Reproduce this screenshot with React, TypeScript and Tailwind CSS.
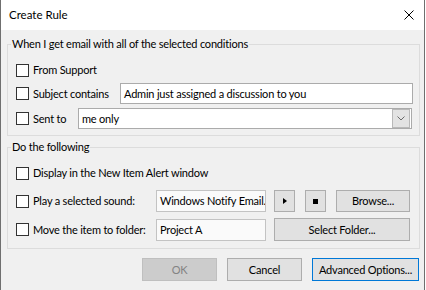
import React from "react";

const Check = () => (
  <span className="block w-[13px] h-[13px] border border-[#333333] bg-white shrink-0" />
);

const Btn = ({ children, className = "" }: { children: React.ReactNode; className?: string }) => (
  <div
    className={`flex items-center justify-center border border-[#adadad] bg-[#e1e1e1] text-black shrink-0 ${className}`}
  >
    {children}
  </div>
);

export default function App() {
  return (
    <div className="w-[426px] h-[290px] bg-white overflow-hidden text-[11px] leading-[16px] tracking-[-0.2px] text-black font-['Lato',sans-serif]">
      <div className="w-[425px] h-[290px] border-x border-[#6f6f6f] flex flex-col">
        {/* Title bar */}
        <div className="h-[30px] bg-white flex items-center justify-between pl-[8px] pr-[10px] shrink-0">
          <span className="text-[11.5px] tracking-normal">Create Rule</span>
          <svg width="10" height="10" viewBox="0 0 10 10">
            <path d="M0.5 0.5 L9.5 9.5 M9.5 0.5 L0.5 9.5" stroke="#000" strokeWidth="1" />
          </svg>
        </div>
        {/* Body */}
        <div className="flex-1 bg-[#f0f0f0] pl-[6px] pt-[6px] flex flex-col">
          <fieldset className="w-[413px] border border-[#dcdcdc] pl-[8px] pr-[6px] pt-[8px] pb-[6px] m-0 min-w-0">
            <legend className="ml-[-5px] px-[1px] leading-[16px]">
              When I get email with all of the selected conditions
            </legend>
            <div className="h-[20px] flex items-center gap-[4px]">
              <Check />
              <span className="whitespace-nowrap">From Support</span>
            </div>
            <div className="mt-[3px] h-[21px] flex items-center">
              <Check />
              <span className="ml-[4px] whitespace-nowrap">Subject contains</span>
              <div className="ml-auto w-[293px] h-[21px] border border-[#ababab] bg-white flex items-center pl-[3px] whitespace-nowrap overflow-hidden">
                Admin just assigned a discussion to you
              </div>
            </div>
            <div className="mt-[4px] h-[21px] flex items-center">
              <Check />
              <span className="ml-[4px] whitespace-nowrap">Sent to</span>
              <div className="ml-auto mr-[1px] w-[334px] h-[21px] border border-[#ababab] bg-white flex items-stretch pr-[1px]">
                <div className="flex-1 flex items-center pl-[3px]">me only</div>
                <div className="w-[18px] border border-[#b9b9b9] bg-[#e3e3e3] flex items-center justify-center">
                  <svg width="8" height="5" viewBox="0 0 8 5">
                    <path d="M0.5 0.5 L4 4 L7.5 0.5" stroke="#6a6a6a" fill="none" strokeWidth="1" />
                  </svg>
                </div>
              </div>
            </div>
          </fieldset>

          <fieldset className="mt-[3px] w-[413px] border border-[#dcdcdc] pl-[8px] pr-[6px] pt-[8px] pb-[7px] m-0 min-w-0">
            <legend className="ml-[-5px] px-[1px] leading-[16px]">Do the following</legend>
            <div className="h-[20px] flex items-center gap-[4px]">
              <Check />
              <span className="whitespace-nowrap">Display in the New Item Alert window</span>
            </div>
            <div className="mt-[7px] h-[22px] flex items-center">
              <div className="w-[140px] flex items-center gap-[4px] shrink-0">
                <Check />
                <span className="whitespace-nowrap">Play a selected sound:</span>
              </div>
              <div className="w-[110px] h-[22px] border border-[#c3c3c3] bg-[#fafafa] flex items-center pl-[3px] whitespace-nowrap overflow-hidden shrink-0">
                Windows Notify Email.
              </div>
              <Btn className="ml-[8px] w-[21px] h-[22px]">
                <svg width="4" height="6" viewBox="0 0 4 6">
                  <path d="M0 0 L4 3 L0 6 Z" fill="#000" />
                </svg>
              </Btn>
              <Btn className="ml-[10px] w-[21px] h-[22px]">
                <span className="block w-[5px] h-[5px] bg-black" />
              </Btn>
              <Btn className="ml-[10px] w-[74px] h-[22px]">Browse...</Btn>
            </div>
            <div className="mt-[6px] h-[23px] flex items-center">
              <div className="w-[140px] flex items-center gap-[4px] shrink-0">
                <Check />
                <span className="whitespace-nowrap">Move the item to folder:</span>
              </div>
              <div className="w-[110px] h-[22px] border border-[#c3c3c3] bg-[#fafafa] flex items-center pl-[3px] whitespace-nowrap overflow-hidden shrink-0">
                Project A
              </div>
              <Btn className="ml-[8px] w-[136px] h-[23px]">Select Folder...</Btn>
            </div>
          </fieldset>

          <div className="mt-[9px] flex justify-end gap-[10px] pr-[5px]">
            <div className="w-[75px] h-[23px] border border-[#bfbfbf] bg-[#cccccc] text-[#838383] flex items-center justify-center">
              OK
            </div>
            <Btn className="w-[75px] h-[23px]">Cancel</Btn>
            <div className="w-[107px] h-[23px] border border-[#0078d7] bg-[#e1e1e1] flex items-center justify-center whitespace-nowrap">
              Advanced Options...
            </div>
          </div>
        </div>
      </div>
    </div>
  );
}
